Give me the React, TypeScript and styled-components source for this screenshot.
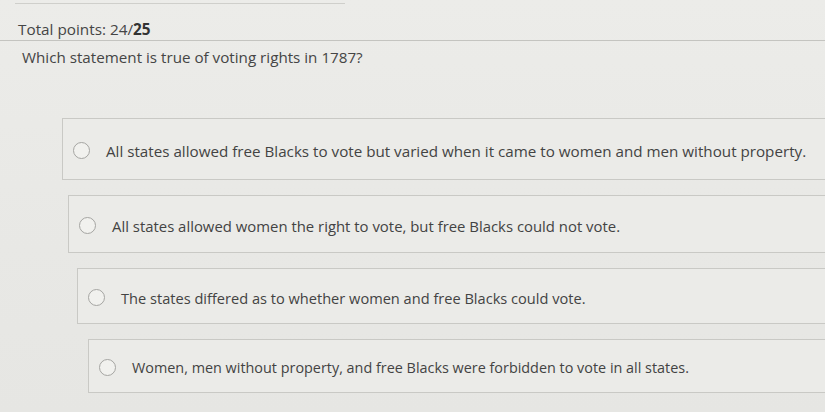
import styled, { createGlobalStyle } from "styled-components";

const GlobalStyle = createGlobalStyle`
  html, body {
    margin: 0;
    padding: 0;
    background: #e9e9e6;
    overflow: hidden;
  }
  body {
    font-family: "Open Sans", "Liberation Sans", sans-serif;
    color: #454545;
  }
`;

const Page = styled.div`
  width: 825px;
  height: 412px;
  display: flex;
  flex-direction: column;
  background: linear-gradient(180deg, #ecece9 0%, #e8e8e5 60%, #e6e6e3 100%);
`;

const TopRule = styled.div`
  margin: 3px 0 0 15px;
  width: 330px;
  height: 1px;
  background: #cfcfcb;
`;

const Points = styled.div`
  padding: 15px 0 0 18px;
  font-size: 15.3px;
  line-height: 20px;
  height: 21px;

  b {
    font-weight: 700;
    color: #333;
  }
`;

const Divider = styled.div`
  height: 1px;
  background: #c4c4c0;
`;

const Question = styled.div`
  padding: 6px 0 0 22px;
  font-size: 15.2px;
  line-height: 20px;
`;

const Options = styled.div`
  display: flex;
  flex-direction: column;
  gap: 15px;
  margin-top: 51px;
`;

const Card = styled.label<{ $indent: number; $height: number }>`
  display: flex;
  align-items: center;
  gap: 16px;
  height: ${(p) => p.$height}px;
  margin-left: ${(p) => p.$indent}px;
  margin-right: -4px;
  padding: 3px 0 0 10px;
  border: 1.5px solid #c9c9c5;
  background: #ebebe8;
  box-sizing: border-box;
  cursor: pointer;
`;

const Radio = styled.span`
  flex: none;
  width: 17px;
  height: 17px;
  border-radius: 50%;
  border: 1.5px solid #a5a5a2;
  background: #f1f1ee;
  box-sizing: border-box;
`;

const OptionText = styled.span<{ $size: number }>`
  font-size: ${(p) => p.$size}px;
  line-height: 20px;
  color: #434343;
  white-space: nowrap;
`;

const answers = [
  { text: "All states allowed free Blacks to vote but varied when it came to women and men without property.", indent: 62, height: 62, size: 15.2 },
  { text: "All states allowed women the right to vote, but free Blacks could not vote.", indent: 68, height: 58, size: 14.9 },
  { text: "The states differed as to whether women and free Blacks could vote.", indent: 77, height: 56, size: 14.6 },
  { text: "Women, men without property, and free Blacks were forbidden to vote in all states.", indent: 88, height: 54, size: 14.4 },
];

function App() {
  return (
    <>
      <GlobalStyle />
      <Page>
        <TopRule />
        <Points>
          Total points: 24/<b>25</b>
        </Points>
        <Divider />
        <Question>Which statement is true of voting rights in 1787?</Question>
        <Options>
          {answers.map((a) => (
            <Card key={a.text} $indent={a.indent} $height={a.height}>
              <Radio />
              <OptionText $size={a.size}>{a.text}</OptionText>
            </Card>
          ))}
        </Options>
      </Page>
    </>
  );
}

export default App;
